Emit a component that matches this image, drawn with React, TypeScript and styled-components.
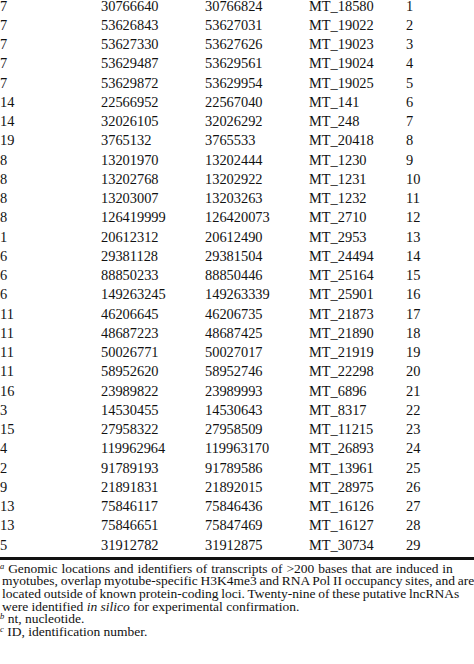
import React from "react";
import styled, { createGlobalStyle } from "styled-components";

const GlobalStyle = createGlobalStyle`
  html, body { margin: 0; padding: 0; background: #ffffff; }
  body { overflow: hidden; }
`;

const Page = styled.div`
  width: 474px;
  height: 664px;
  overflow: hidden;
  background: #ffffff;
  color: #111111;
  font-family: "Liberation Serif", "Times New Roman", serif;
`;

const Table = styled.div`
  margin-top: -3.5px;
  display: flex;
  flex-direction: column;
`;

const Row = styled.div`
  display: grid;
  grid-template-columns: 101px 104px 104px 97px 1fr;
  height: 19.25px;
  font-size: 14.4px;
  line-height: 19.25px;
  white-space: nowrap;
`;

const Cell = styled.div``;

const Rule = styled.div`
  margin-top: 2.5px;
  height: 2.7px;
  background: #111111;
`;

const Notes = styled.div`
  margin-top: 2.9px;
  font-size: 13.5px;
  line-height: 12.6px;
  padding-left: 2px;
`;

const NoteLine = styled.div<{ $ws?: number }>`
  white-space: nowrap;
  word-spacing: ${(p) => p.$ws ?? 0}px;
`;

const Sup = styled.sup`
  font-style: italic;
  font-size: 8.5px;
  line-height: 0;
  vertical-align: 4px;
  margin-left: -2px;
`;

const rows: [string, string, string, string, string][] = [
  ["7", "30766640", "30766824", "MT_18580", "1"],
  ["7", "53626843", "53627031", "MT_19022", "2"],
  ["7", "53627330", "53627626", "MT_19023", "3"],
  ["7", "53629487", "53629561", "MT_19024", "4"],
  ["7", "53629872", "53629954", "MT_19025", "5"],
  ["14", "22566952", "22567040", "MT_141", "6"],
  ["14", "32026105", "32026292", "MT_248", "7"],
  ["19", "3765132", "3765533", "MT_20418", "8"],
  ["8", "13201970", "13202444", "MT_1230", "9"],
  ["8", "13202768", "13202922", "MT_1231", "10"],
  ["8", "13203007", "13203263", "MT_1232", "11"],
  ["8", "126419999", "126420073", "MT_2710", "12"],
  ["1", "20612312", "20612490", "MT_2953", "13"],
  ["6", "29381128", "29381504", "MT_24494", "14"],
  ["6", "88850233", "88850446", "MT_25164", "15"],
  ["6", "149263245", "149263339", "MT_25901", "16"],
  ["11", "46206645", "46206735", "MT_21873", "17"],
  ["11", "48687223", "48687425", "MT_21890", "18"],
  ["11", "50026771", "50027017", "MT_21919", "19"],
  ["11", "58952620", "58952746", "MT_22298", "20"],
  ["16", "23989822", "23989993", "MT_6896", "21"],
  ["3", "14530455", "14530643", "MT_8317", "22"],
  ["15", "27958322", "27958509", "MT_11215", "23"],
  ["4", "119962964", "119963170", "MT_26893", "24"],
  ["2", "91789193", "91789586", "MT_13961", "25"],
  ["9", "21891831", "21892015", "MT_28975", "26"],
  ["13", "75846117", "75846436", "MT_16126", "27"],
  ["13", "75846651", "75847469", "MT_16127", "28"],
  ["5", "31912782", "31912875", "MT_30734", "29"],
];

export default function App() {
  return (
    <Page>
      <GlobalStyle />
      <Table>
        {rows.map((r, i) => (
          <Row key={i}>
            <Cell>{r[0]}</Cell>
            <Cell>{r[1]}</Cell>
            <Cell>{r[2]}</Cell>
            <Cell>{r[3]}</Cell>
            <Cell>{r[4]}</Cell>
          </Row>
        ))}
      </Table>
      <Rule />
      <Notes>
        <NoteLine $ws={0.5}>
          <Sup>a</Sup> Genomic locations and identifiers of transcripts of &gt;200 bases that are induced in
        </NoteLine>
        <NoteLine $ws={-0.6}>myotubes, overlap myotube-specific H3K4me3 and RNA Pol II occupancy sites, and are</NoteLine>
        <NoteLine $ws={-0.6}>located outside of known protein-coding loci. Twenty-nine of these putative lncRNAs</NoteLine>
        <NoteLine>
          were identified <i>in silico</i> for experimental confirmation.
        </NoteLine>
        <NoteLine>
          <Sup>b</Sup> nt, nucleotide.
        </NoteLine>
        <NoteLine>
          <Sup>c</Sup> ID, identification number.
        </NoteLine>
      </Notes>
    </Page>
  );
}
